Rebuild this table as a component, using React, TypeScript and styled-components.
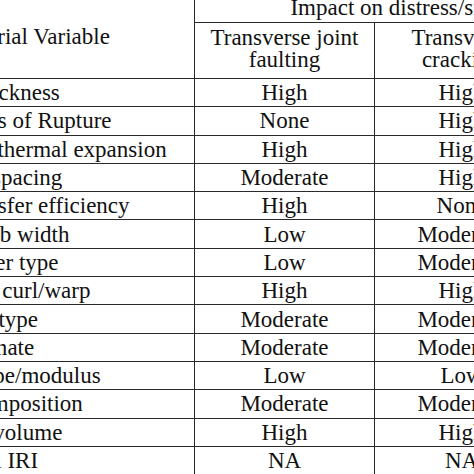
import React from "react";
import styled, { createGlobalStyle } from "styled-components";

const GlobalStyle = createGlobalStyle`
  html, body {
    margin: 0;
    padding: 0;
    background: #ffffff;
  }
`;

const Viewport = styled.div`
  width: 474px;
  height: 474px;
  overflow: hidden;
  background: #ffffff;
`;

const Table = styled.table`
  border-collapse: collapse;
  table-layout: fixed;
  width: 792px;
  margin: -6.5px 0 0 -125px;
  font-family: "Liberation Serif", "Times New Roman", serif;
  font-size: 23px;
  color: #111111;
`;

const HeadCell = styled.th<{ $tall?: boolean }>`
  font-weight: normal;
  border: 1.5px solid #2a2a2a;
  text-align: center;
  vertical-align: middle;
  padding: ${(p) => (p.$tall ? "0 0 3px 0" : "0")};
  line-height: 22px;
  height: ${(p) => (p.$tall ? "52.5px" : "27px")};
  white-space: nowrap;
`;

const VariableHead = styled(HeadCell)`
  padding: 1px 10px 0 0;
  line-height: 25px;
`;

const Row = styled.tr`
  height: 28.3px;
`;

const Cell = styled.td<{ $label?: boolean }>`
  border: 1.5px solid #2a2a2a;
  padding: 0 0 0 ${(p) => (p.$label ? "49px" : "0")};
  text-align: ${(p) => (p.$label ? "left" : "center")};
  vertical-align: middle;
  white-space: nowrap;
  overflow: hidden;
  line-height: 25px;
`;

type Impact = [string, string, string, string];

const rows: Impact[] = [
  ["PCC thickness", "High", "High", "High"],
  ["Modulus of Rupture", "None", "High", "High"],
  ["Coeffs. thermal expansion", "High", "High", "High"],
  ["Dowel spacing", "Moderate", "High", "Moderate"],
  ["Ld. transfer efficiency", "High", "None", "High"],
  ["PRC slab width", "Low", "Moderate", "Low"],
  ["Stabilizer type", "Low", "Moderate", "Low"],
  ["Built-in curl/warp", "High", "High", "High"],
  ["Sealant type", "Moderate", "Moderate", "Moderate"],
  ["Site climate", "Moderate", "Moderate", "Moderate"],
  ["Base type/modulus", "Low", "Low", "Low"],
  ["Mix composition", "Moderate", "Moderate", "Moderate"],
  ["Traffic volume", "High", "High", "High"],
  ["Original IRI", "NA", "NA", "High"],
];

export default function App() {
  return (
    <>
      <GlobalStyle />
      <Viewport>
        <Table>
          <colgroup>
            <col style={{ width: 319 }} />
            <col style={{ width: 180 }} />
            <col style={{ width: 174 }} />
            <col style={{ width: 119 }} />
          </colgroup>
          <thead>
            <tr>
              <VariableHead rowSpan={2}>Material Variable</VariableHead>
              <HeadCell colSpan={3}>Impact on distress/smoothness</HeadCell>
            </tr>
            <tr>
              <HeadCell $tall>
                Transverse joint
                <br />
                faulting
              </HeadCell>
              <HeadCell $tall>
                Transverse
                <br />
                cracking
              </HeadCell>
              <HeadCell $tall>
                Smoothness
                <br />
                (IRI)
              </HeadCell>
            </tr>
          </thead>
          <tbody>
            {rows.map(([label, faulting, cracking, iri]) => (
              <Row key={label}>
                <Cell $label>{label}</Cell>
                <Cell>{faulting}</Cell>
                <Cell>{cracking}</Cell>
                <Cell>{iri}</Cell>
              </Row>
            ))}
          </tbody>
        </Table>
      </Viewport>
    </>
  );
}
